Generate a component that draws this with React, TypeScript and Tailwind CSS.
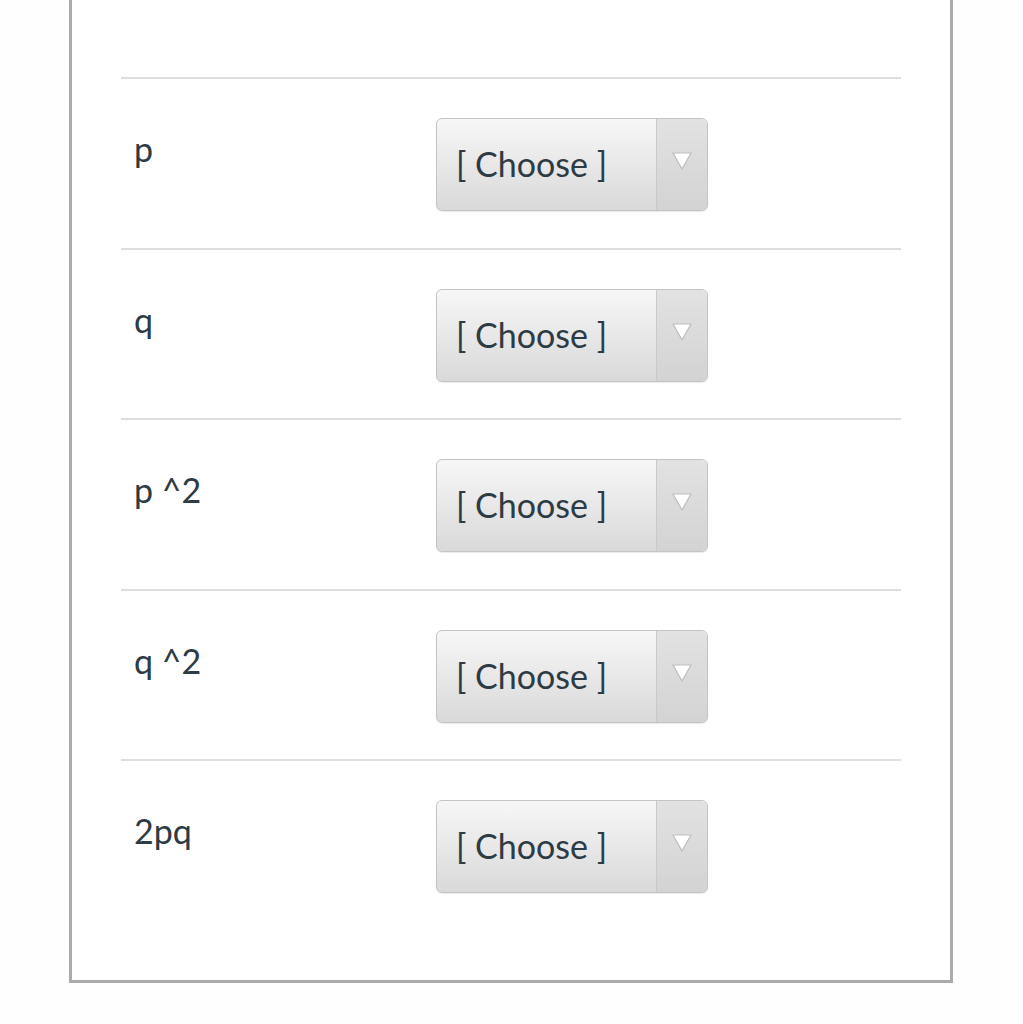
const rows = ["p", "q", "p ^2", "q ^2", "2pq"];

const ChooseSelect = () => {
  return (
    <div className="flex h-[93px] w-[272px] overflow-hidden rounded-[6px] border border-[#c4c4c4] bg-gradient-to-b from-[#f7f7f7] to-[#d9d9d9] shadow-[0_1px_1px_rgba(0,0,0,0.08)]">
      <div className="flex flex-1 items-center pb-[2px] pl-[19px] text-[34px] text-[#2d3b45]">
        [ Choose ]
      </div>
      <div className="flex w-[51px] items-start justify-center border-l border-[#c9c9c9] bg-gradient-to-b from-[#e2e2e2] to-[#d3d3d3] pt-[32px]">
        <svg width="22" height="20" viewBox="0 0 22 20">
          <path d="M2 2 L20 2 L11 18 Z" fill="#ffffff" stroke="#bdbdbd" strokeWidth="1.2" strokeLinejoin="round" />
        </svg>
      </div>
    </div>
  );
};

export default function App() {
  return (
    <div className="min-h-[1024px] bg-[#fefefe] font-['Lato','Liberation_Sans',sans-serif]">
      <div className="ml-[69px] w-[884px] border-x-[3px] border-b-[3px] border-[#ababab] bg-white px-[49px] pb-[2px] pt-[77px]">
        {rows.map((label, i) => (
          <div
            key={label}
            className={`flex border-t-2 border-[#dedede] pt-[39px] ${i === rows.length - 1 ? "h-[219px]" : "h-[170.5px]"}`}
          >
            <div className="w-[315px] pl-[13px] pt-[7px] text-[34px] leading-[48px] text-[#2d3b45]">{label}</div>
            <ChooseSelect />
          </div>
        ))}
      </div>
    </div>
  );
}
